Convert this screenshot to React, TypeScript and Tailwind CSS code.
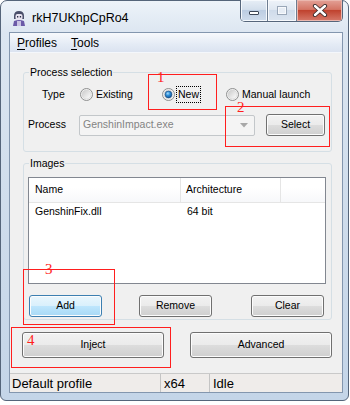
const btn =
  "flex items-center justify-center rounded-[3px] border border-[#707070] bg-[linear-gradient(to_bottom,#f2f2f2,#ebebeb_49%,#dddddd_50%,#cfcfcf)] shadow-[inset_0_0_0_1px_#fcfcfc] text-[10.5px]";
const btnHot =
  "flex items-center justify-center rounded-[3px] border border-[#3c7fb1] bg-[linear-gradient(to_bottom,#eaf6fd,#d9f0fc_49%,#bee6fd_50%,#a7d9f5)] shadow-[inset_0_0_0_1px_#fcfcfc] text-[10.5px]";

const Radio = ({ checked }: { checked?: boolean }) => (
  <svg width="13" height="13" viewBox="0 0 13 13" className="shrink-0">
    <defs>
      <linearGradient id="rbFill" x1="0" y1="0" x2="1" y2="1">
        <stop offset="0" stopColor="#c9c9c9" />
        <stop offset="1" stopColor="#ffffff" />
      </linearGradient>
      <radialGradient id="rbDot" cx="0.4" cy="0.35" r="0.7">
        <stop offset="0" stopColor="#a9dcfa" />
        <stop offset="0.45" stopColor="#2d8ed8" />
        <stop offset="1" stopColor="#124e8c" />
      </radialGradient>
    </defs>
    <circle cx="6.5" cy="6.5" r="6" fill="#f4f4f4" stroke="#8e8f8f" />
    <circle cx="6.5" cy="6.5" r="4.5" fill="url(#rbFill)" stroke="#d2d2d2" strokeWidth="0.6" />
    {checked && <circle cx="6.5" cy="6.5" r="3.4" fill="url(#rbDot)" stroke="#1a4a80" strokeWidth="0.6" />}
  </svg>
);

const AppIcon = () => (
  <svg width="14" height="16" viewBox="0 0 14 16">
    <path d="M2 6 Q2 1 7 1 Q12 1 12 6 L12 9 L2 9 Z" fill="#4a4f6a" />
    <rect x="3.5" y="4" width="7" height="6" rx="2" fill="#e8e4f0" />
    <rect x="5" y="6" width="1.3" height="1.5" fill="#2b2f48" />
    <rect x="7.8" y="6" width="1.3" height="1.5" fill="#2b2f48" />
    <path d="M1 16 L2 11 Q7 9 12 11 L13 16 Z" fill="#6b5aa8" />
    <rect x="5" y="11" width="4" height="5" fill="#c9c3e3" />
  </svg>
);

const Annot = ({ cls }: { cls: string }) => <div className={"absolute border border-[#ff1e1e] " + cls} />;
const Num = ({ cls, n }: { cls: string; n: string }) => (
  <div className={"absolute font-['Liberation_Serif'] text-[15px] leading-none text-[#ff1e1e] " + cls}>{n}</div>
);

export default function App() {
  return (
    <div className="relative w-[350px] h-[405px] bg-white overflow-hidden font-['Liberation_Sans',Arial,sans-serif] text-black">
      <div className="flex flex-col w-[349px] h-[401px] rounded-t-[7px] rounded-b-[6px] border border-[#55657a] bg-[linear-gradient(to_bottom,#edf3f9,#dce6f1_8%,#cddbeb_60%,#c4d5e8)] pl-[8px] pr-[5px] pb-[7px]">
        {/* title bar */}
        <div className="flex h-[31px] justify-between">
          <div className="flex items-center h-[16px] mt-[9px] ml-[3px] gap-[6px]">
            <AppIcon />
            <span className="text-[12.5px] leading-none">rkH7UKhpCpRo4</span>
          </div>
          <div className="flex -mt-[1px] h-[22px] rounded-b-[5px] overflow-hidden border border-t-0 border-[#56667b] shadow-[0_1px_0_#e9eff6]">
            <div className="w-[27px] flex items-end justify-center pb-[6px] border-r border-[#6d7d91] bg-[linear-gradient(to_bottom,#e7eef6,#d3dfec_45%,#bccde2_50%,#cfdcec)] shadow-[inset_0_0_0_1px_#f4f8fc]">
              <div className="w-[10px] h-[4px] bg-white border border-[#3b4656] rounded-[1px]" />
            </div>
            <div className="w-[29px] flex items-center justify-center border-r border-[#6d7d91] bg-[linear-gradient(to_bottom,#eef3f9,#dfe7f1_45%,#cfdbea_50%,#dce5f0)] shadow-[inset_0_0_0_1px_#f7f9fc]">
              <div className="w-[10px] h-[9px] border border-[#9aa7b8] bg-[#e7edf5] shadow-[inset_0_0_0_1px_#f7f9fc]" />
            </div>
            <div className="w-[45px] flex items-center justify-center bg-[linear-gradient(to_bottom,#e3a197,#d47565_45%,#c0432f_50%,#d6796a)] shadow-[inset_0_0_0_1px_#eab7ae]">
              <svg width="16" height="13" viewBox="0 0 16 13">
                <path d="M3 2 L13 11 M13 2 L3 11" stroke="#3a2b2b" strokeWidth="4.2" strokeLinecap="round" />
                <path d="M3 2 L13 11 M13 2 L3 11" stroke="#ffffff" strokeWidth="2.4" strokeLinecap="round" />
              </svg>
            </div>
          </div>
        </div>

        {/* client */}
        <div className="flex flex-col h-[361px] border border-[#8396ae] bg-[#f0f0f0]">
          <div className="flex items-center h-[20px] pl-[7px] gap-[14px] text-[12px] bg-[linear-gradient(to_bottom,#f7f9fc,#e4ebf5_60%,#dbe3f0)] border-b border-[#f4f7fb]">
            <span><span className="underline underline-offset-2">P</span>rofiles</span>
            <span><span className="underline underline-offset-2">T</span>ools</span>
          </div>

          {/* Process selection */}
          <div className="mt-[19px] ml-[13px] w-[309px] h-[80px] border border-[#d5dfe5] rounded-[3px] text-[10.5px]">
            <div className="-mt-[8px] ml-[5px] px-[1px] w-fit bg-[#f0f0f0] leading-[14px]">Process selection</div>
            <div className="mt-[7px] h-[17px] flex items-center pl-[18px]">
              <span className="w-[38px]">Type</span>
              <div className="w-[82px] flex items-center gap-[3px]">
                <Radio />
                <span>Existing</span>
              </div>
              <div className="w-[64px] flex items-center gap-[1px]">
                <Radio checked />
                <span className="border border-dotted border-black px-[1px] leading-[15px]">New</span>
              </div>
              <div className="flex items-center gap-[3px]">
                <Radio />
                <span>Manual launch</span>
              </div>
            </div>
            <div className="mt-[11px] h-[22px] flex items-center pl-[4px]">
              <span className="w-[51px]">Process</span>
              <div className="w-[176px] h-[21px] flex items-center justify-between pl-[3px] pr-[6px] rounded-[2px] border border-[#c3c7ca] bg-[#f4f4f4] text-[#838383]">
                <span>GenshinImpact.exe</span>
                <svg width="8" height="5" viewBox="0 0 8 5">
                  <path d="M0 0 L8 0 L4 4.5 Z" fill="#a8a8a8" />
                </svg>
              </div>
              <div className={btn + " ml-[11px] w-[59px] h-[22px]"}>Select</div>
            </div>
          </div>

          {/* Images */}
          <div className="mt-[11px] ml-[13px] w-[309px] h-[157px] border border-[#d5dfe5] rounded-[3px] text-[10.5px]">
            <div className="-mt-[8px] ml-[5px] px-[1px] w-fit bg-[#f0f0f0] leading-[14px]">Images</div>
            <div className="mt-[7px] ml-[4px] w-[298px] h-[107px] border border-[#828790] bg-white">
              <div className="flex h-[25px] border-b border-[#e5e5e5] bg-[linear-gradient(to_bottom,#ffffff,#ffffff_40%,#f7f8fa)]">
                <div className="w-[152px] pl-[6px] flex items-center border-r border-[#e5e5e5]">Name</div>
                <div className="w-[100px] pl-[5px] flex items-center border-r border-[#e5e5e5]">Architecture</div>
              </div>
              <div className="flex h-[18px] items-center">
                <div className="w-[152px] pl-[6px]">GenshinFix.dll</div>
                <div className="pl-[6px]">64 bit</div>
              </div>
            </div>
            <div className="mt-[11px] flex h-[22px]">
              <div className={btnHot + " ml-[5px] w-[73px]"}>Add</div>
              <div className={btn + " ml-[37px] w-[73px]"}>Remove</div>
              <div className={btn + " ml-[39px] w-[73px]"}>Clear</div>
            </div>
          </div>

          <div className="mt-[12px] flex h-[26px] text-[10.5px]">
            <div className={btn + " ml-[12px] w-[142px]"}>Inject</div>
            <div className={btn + " ml-[26px] w-[142px]"}>Advanced</div>
          </div>

          {/* status bar */}
          <div className="mt-auto flex h-[19px] border-t border-[#c9c9c9] bg-[#efecea] text-[13px] leading-none">
            <div className="w-[151px] pl-[2px] flex items-center border-r border-[#c4c4c4]">Default profile</div>
            <div className="w-[49px] pl-[3px] flex items-center border-r border-[#c4c4c4]">x64</div>
            <div className="flex-1 pl-[3px] flex items-center">Idle</div>
          </div>
        </div>
      </div>

      <Annot cls="left-[148px] top-[74px] w-[69px] h-[36px]" />
      <Num cls="left-[157px] top-[70px]" n="1" />
      <Annot cls="left-[225px] top-[106px] w-[105px] h-[41px]" />
      <Num cls="left-[237px] top-[100px]" n="2" />
      <Annot cls="left-[23px] top-[269px] w-[92px] h-[56px]" />
      <Num cls="left-[45px] top-[262px]" n="3" />
      <Annot cls="left-[11px] top-[327px] w-[160px] h-[41px]" />
      <Num cls="left-[27px] top-[333px]" n="4" />
    </div>
  );
}
